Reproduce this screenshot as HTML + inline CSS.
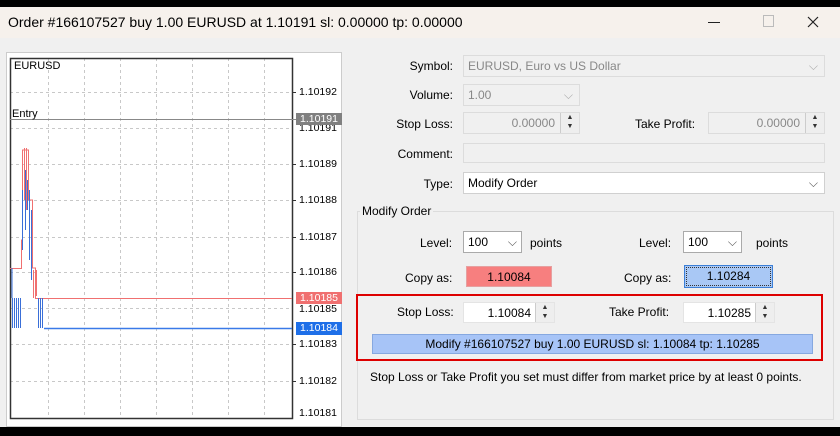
<!DOCTYPE html><html><head><style>
body{margin:0;width:840px;height:436px;background:#000;position:relative;overflow:hidden;font-family:"Liberation Sans",sans-serif;font-size:12px;color:#000}
.a{position:absolute}
.win{left:0;top:7px;width:840px;height:420px;background:#f0f0f0}
.title{left:0;top:7px;width:840px;height:31px;background:#f6f1ec}
.lbl{text-align:right;width:110px}
.fld{background:#fff;border:1px solid #d0d0d0;box-sizing:border-box;height:22px;line-height:20px;padding-left:4px}
.dis{background:#f0f0f0;color:#888;border-color:#dcdcdc}
.spin{width:18px;right:0;top:0;height:100%;border-left:1px solid #ccc;background:#eee;font-size:7px;line-height:9px;text-align:center;color:#333}
.ax{font-size:10.5px;left:299px}
</style></head><body>
<div class="a win"></div>
<div class="a title"></div>
<div class="a" style="left:8px;top:14px;font-size:14px">Order #166107527 buy 1.00 EURUSD at 1.10191 sl: 0.00000 tp: 0.00000</div>
<div class="a" style="left:708px;top:22px;width:12px;height:1px;background:#222"></div>
<div class="a" style="left:763px;top:15px;width:9px;height:10px;border:1px solid #bbb"></div>
<svg class="a" style="left:807px;top:16px" width="12" height="12"><path d="M1 1L11 11M11 1L1 11" stroke="#222" stroke-width="1.2"/></svg>
<!-- chart -->
<div class="a" style="left:6px;top:52px;width:336px;height:375px;background:#fff;border:1px solid #ccc;box-sizing:border-box"></div>
<svg class="a" style="left:0;top:0" width="350" height="436">
<g stroke="#c8c8c8" stroke-dasharray="3,3" stroke-width="1">
<line x1="48.5" y1="58" x2="48.5" y2="418"/><line x1="84.5" y1="58" x2="84.5" y2="418"/><line x1="120.5" y1="58" x2="120.5" y2="418"/><line x1="156.5" y1="58" x2="156.5" y2="418"/><line x1="192.5" y1="58" x2="192.5" y2="418"/><line x1="228.5" y1="58" x2="228.5" y2="418"/><line x1="264.5" y1="58" x2="264.5" y2="418"/>
<line x1="10" y1="92.5" x2="292" y2="92.5"/><line x1="10" y1="128.5" x2="292" y2="128.5"/><line x1="10" y1="164.5" x2="292" y2="164.5"/><line x1="10" y1="200.5" x2="292" y2="200.5"/><line x1="10" y1="237.5" x2="292" y2="237.5"/><line x1="10" y1="272.5" x2="292" y2="272.5"/><line x1="10" y1="308.5" x2="292" y2="308.5"/><line x1="10" y1="344.5" x2="292" y2="344.5"/><line x1="10" y1="381.5" x2="292" y2="381.5"/>
</g>
<rect x="10.5" y="58.5" width="282" height="360" fill="none" stroke="#333" stroke-width="1.5"/>
<line x1="10" y1="119.5" x2="342" y2="119.5" stroke="#888"/>
<polyline points="10,268.5 21.5,268.5 21.5,240 22.5,240 22.5,150 28.5,150 28.5,200 32.5,200 32.5,268 35.5,268 35.5,298.5 292,298.5" fill="none" stroke="#f07070" stroke-width="1"/>
<g stroke="#f07070" stroke-width="1"><line x1="24.5" y1="148" x2="24.5" y2="200"/><line x1="26.5" y1="148" x2="26.5" y2="210"/><line x1="33.5" y1="270" x2="33.5" y2="298"/><line x1="36.5" y1="270" x2="36.5" y2="296"/></g>
<g stroke="#3a6fd8" stroke-width="1"><line x1="12.5" y1="298" x2="12.5" y2="328"/><line x1="14.5" y1="298" x2="14.5" y2="328"/><line x1="16.5" y1="298" x2="16.5" y2="328"/><line x1="18.5" y1="298" x2="18.5" y2="328"/><line x1="20.5" y1="298" x2="20.5" y2="328"/>
<line x1="22.5" y1="190" x2="22.5" y2="250"/><line x1="25.5" y1="170" x2="25.5" y2="230"/><line x1="27.5" y1="180" x2="27.5" y2="210"/><line x1="29.5" y1="190" x2="29.5" y2="260"/><line x1="31.5" y1="210" x2="31.5" y2="280"/>
<line x1="38.5" y1="298" x2="38.5" y2="328"/><line x1="40.5" y1="298" x2="40.5" y2="328"/><line x1="42.5" y1="298" x2="42.5" y2="328"/></g>
<line x1="12" y1="268" x2="12" y2="298" stroke="#3a6fd8"/>
<line x1="44" y1="328.5" x2="292" y2="328.5" stroke="#3a7ae8" stroke-width="1.5"/>
<g stroke="#333"><line x1="292" y1="92.5" x2="296" y2="92.5"/><line x1="292" y1="164.5" x2="296" y2="164.5"/><line x1="292" y1="200.5" x2="296" y2="200.5"/><line x1="292" y1="237.5" x2="296" y2="237.5"/><line x1="292" y1="272.5" x2="296" y2="272.5"/><line x1="292" y1="344.5" x2="296" y2="344.5"/><line x1="292" y1="381.5" x2="296" y2="381.5"/></g>
</svg>
<div class="a" style="left:14px;top:60px;font-size:11px">EURUSD</div>
<div class="a" style="left:12px;top:108px;font-size:11px">Entry</div>
<div class="a ax" style="top:86px">1.10192</div>
<div class="a ax" style="top:122px">1.10191</div>
<div class="a" style="left:296px;top:113px;width:46px;height:12px;background:#808080;color:#fff;font-size:10.5px;line-height:12px;text-align:center">1.10191</div>
<div class="a ax" style="top:158px">1.10189</div>
<div class="a ax" style="top:194px">1.10188</div>
<div class="a ax" style="top:231px">1.10187</div>
<div class="a ax" style="top:266px">1.10186</div>
<div class="a ax" style="top:303px">1.10185</div>
<div class="a" style="left:296px;top:292px;width:46px;height:12px;background:#f07070;color:#fff;font-size:10.5px;line-height:12px;text-align:center">1.10185</div>
<div class="a" style="left:296px;top:322px;width:46px;height:13px;background:#1e6fe8;color:#fff;font-size:10.5px;line-height:13px;text-align:center">1.10184</div>
<div class="a ax" style="top:338px">1.10183</div>
<div class="a ax" style="top:375px">1.10182</div>
<div class="a ax" style="top:407px">1.10181</div>
<!-- form -->
<div class="a lbl" style="left:343px;top:59px">Symbol:</div>
<div class="a fld dis" style="left:463px;top:55px;width:362px">EURUSD, Euro vs US Dollar<span class="a" style="right:6px;color:#aaa">⌵</span></div>
<div class="a lbl" style="left:343px;top:88px">Volume:</div>
<div class="a fld dis" style="left:463px;top:84px;width:117px;background:#f0f0f0">1.00<span class="a" style="right:6px;color:#aaa">⌵</span></div>
<div class="a lbl" style="left:343px;top:117px">Stop Loss:</div>
<div class="a fld dis" style="left:463px;top:112px;width:117px;text-align:right;padding-right:24px">0.00000<div class="a spin">▲<br>▼</div></div>
<div class="a" style="left:635px;top:117px">Take Profit:</div>
<div class="a fld dis" style="left:708px;top:112px;width:117px;text-align:right;padding-right:24px">0.00000<div class="a spin">▲<br>▼</div></div>
<div class="a lbl" style="left:343px;top:147px">Comment:</div>
<div class="a fld dis" style="left:463px;top:143px;width:362px;height:20px"></div>
<div class="a lbl" style="left:343px;top:177px">Type:</div>
<div class="a fld" style="left:463px;top:172px;width:362px">Modify Order<span class="a" style="right:6px;color:#555">⌵</span></div>
<div class="a" style="left:357px;top:211px;width:475px;height:207px;border:1px solid #dcdcdc"></div>
<div class="a" style="left:360px;top:204px;background:#f0f0f0;padding:0 2px">Modify Order</div>
<div class="a" style="left:420px;top:236px">Level:</div>
<div class="a fld" style="left:463px;top:231px;width:59px;border-color:#aaa">100<span class="a" style="right:4px;color:#555">⌵</span></div>
<div class="a" style="left:530px;top:236px">points</div>
<div class="a" style="left:639px;top:236px">Level:</div>
<div class="a fld" style="left:683px;top:231px;width:59px;border-color:#aaa">100<span class="a" style="right:4px;color:#555">⌵</span></div>
<div class="a" style="left:756px;top:236px">points</div>
<div class="a" style="left:405px;top:271px">Copy as:</div>
<div class="a" style="left:466px;top:266px;width:86px;height:21px;background:#f77f7f;border:1px solid #e6a0a0;box-sizing:border-box;text-align:center;line-height:20px">1.10084</div>
<div class="a" style="left:624px;top:271px">Copy as:</div>
<div class="a" style="left:684px;top:265px;width:89px;height:23px;background:#a9c8f5;border:1px solid #3c7fd6;box-sizing:border-box;text-align:center;line-height:21px;outline:1px dotted #333;outline-offset:-3px">1.10284</div>
<div class="a" style="left:356px;top:294px;width:467px;height:67px;border:2px solid #d00;box-sizing:border-box"></div>
<div class="a" style="left:397px;top:305px">Stop Loss:</div>
<div class="a fld" style="left:463px;top:302px;width:92px;height:21px;border-color:#e4e4e4;text-align:right;padding-right:23px">1.10084<div class="a spin">▲<br>▼</div></div>
<div class="a" style="left:609px;top:305px">Take Profit:</div>
<div class="a fld" style="left:683px;top:302px;width:92px;height:21px;border-color:#e4e4e4;text-align:right;padding-right:23px">1.10285<div class="a spin">▲<br>▼</div></div>
<div class="a" style="left:372px;top:334px;width:441px;height:20px;background:#a7c4f7;border:1px solid #86a8e0;box-sizing:border-box;text-align:center;line-height:18px">Modify #166107527 buy 1.00 EURUSD sl: 1.10084 tp: 1.10285</div>
<div class="a" style="left:370px;top:370px">Stop Loss or Take Profit you set must differ from market price by at least 0 points.</div>
</body></html>
